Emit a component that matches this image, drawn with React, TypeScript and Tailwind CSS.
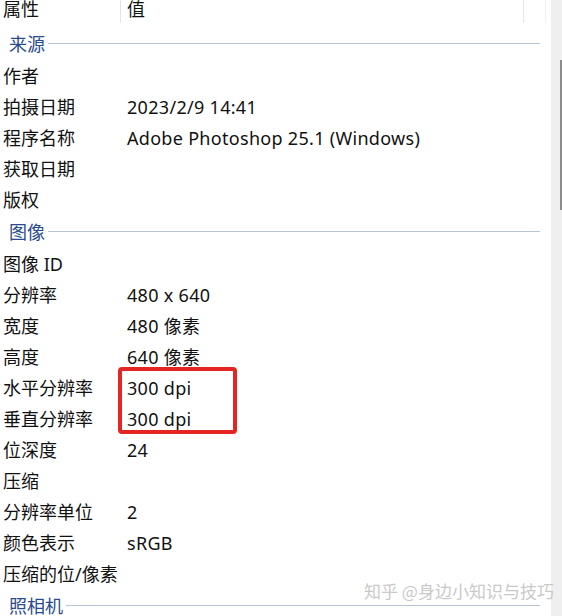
import React from 'react';

type Row = { label: string; value?: string };

const sections: { title: string; rows: Row[] }[] = [
  {
    title: '来源',
    rows: [
      { label: '作者' },
      { label: '拍摄日期', value: '2023/2/9 14:41' },
      { label: '程序名称', value: 'Adobe Photoshop 25.1 (Windows)' },
      { label: '获取日期' },
      { label: '版权' },
    ],
  },
  {
    title: '图像',
    rows: [
      { label: '图像 ID' },
      { label: '分辨率', value: '480 x 640' },
      { label: '宽度', value: '480 像素' },
      { label: '高度', value: '640 像素' },
      { label: '水平分辨率', value: '300 dpi' },
      { label: '垂直分辨率', value: '300 dpi' },
      { label: '位深度', value: '24' },
      { label: '压缩' },
      { label: '分辨率单位', value: '2' },
      { label: '颜色表示', value: 'sRGB' },
      { label: '压缩的位/像素' },
    ],
  },
  { title: '照相机', rows: [] },
];

const font = { fontFamily: '"Noto Sans", "Noto Sans CJK SC", sans-serif' };

const SectionHeader = ({ title }: { title: string }) => (
  <div className="h-[33px] flex items-center pl-[9px] pr-[11px] pb-px">
    <span className="text-[18px] leading-none text-[#2a4b8d]">{title}</span>
    <div className="flex-1 h-px bg-[#b9c3d3] ml-[3px] -mt-px" />
  </div>
);

const PropRow = ({ row }: { row: Row }) => (
  <div className="h-[31px] flex items-center text-[18px] leading-none text-[#111] pb-[2px]">
    <span className="w-[127px] pl-[3px] shrink-0">{row.label}</span>
    <span className="tracking-[0.3px]">{row.value}</span>
  </div>
);

export default function App() {
  return (
    <div className="relative w-[562px] h-[616px] overflow-hidden bg-white flex" style={font}>
      <div className="flex-1 flex flex-col">
        {/* column header */}
        <div className="h-[28px] flex text-[18px] leading-[18px] text-[#111] shrink-0">
          <div className="w-[121px] pl-[3px] border-r border-[#e3e3e3] h-[23px]">属性</div>
          <div className="w-[403px] pl-[6px] border-r border-[#e3e3e3] h-[23px]">值</div>
          <div className="w-[22px] border-r border-[#f0f0f0] h-[23px]" />
        </div>
        {sections.map((s) => (
          <div key={s.title}>
            <SectionHeader title={s.title} />
            {s.rows.map((r) => (
              <PropRow key={r.label} row={r} />
            ))}
          </div>
        ))}
      </div>

      {/* scrollbar */}
      <div className="w-[11px] bg-[#efefef] shrink-0 relative">
        <div className="absolute right-0 top-[60px] w-[2px] h-[150px] bg-[#8c8c8c]" />
      </div>

      {/* highlight box */}
      <div className="absolute left-[118px] top-[367px] w-[119px] h-[67px] border-[4px] border-[#e52521] rounded-[4px]" />

      {/* watermark */}
      <div
        className="absolute left-[364px] top-[580px] text-[17px] leading-[22px] text-[#c9c9c9] whitespace-nowrap"
        style={{ fontFamily: '"Noto Sans CJK SC", sans-serif' }}
      >
        知乎 @身边小知识与技巧
      </div>
    </div>
  );
}
